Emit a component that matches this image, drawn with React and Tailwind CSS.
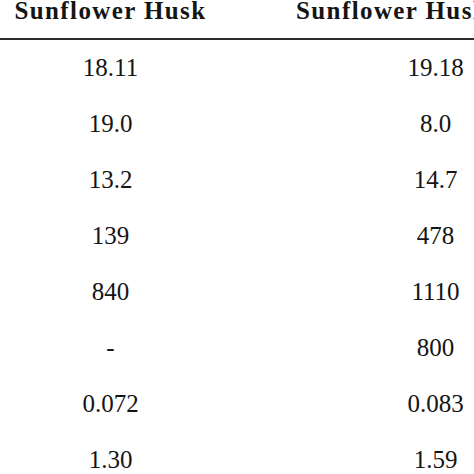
import React from 'react';

// rows of the comparison table: [left value, right value]
const rows = [
  ['18.11', '19.18'],
  ['19.0', '8.0'],
  ['13.2', '14.7'],
  ['139', '478'],
  ['840', '1110'],
  ['-', '800'],
  ['0.072', '0.083'],
  ['1.30', '1.59'],
];

export default function App() {
  return (
    <div
      className="w-[474px] h-[474px] overflow-hidden bg-white text-[#151515]"
      style={{ fontFamily: '"Liberation Serif", "Times New Roman", serif' }}
    >
      <div className="w-[650px]">
        {/* header */}
        <div className="grid grid-cols-[221px_429px] h-[40px] border-b-2 border-[#2b2b2b]">
          <div className="text-center font-bold text-[25px] leading-[21px] tracking-[1.4px] whitespace-nowrap">
            Sunflower Husk
          </div>
          <div className="pl-[75px] text-left font-bold text-[25px] leading-[21px] tracking-[1.4px] whitespace-nowrap">
            Sunflower Husk Pellets
          </div>
        </div>

        {/* body */}
        {rows.map(([a, b], i) => (
          <div key={i} className="grid grid-cols-[221px_429px] h-[56px] text-[25px] leading-[56px]">
            <div className="text-center">{a}</div>
            <div className="text-center">{b}</div>
          </div>
        ))}
      </div>
    </div>
  );
}
